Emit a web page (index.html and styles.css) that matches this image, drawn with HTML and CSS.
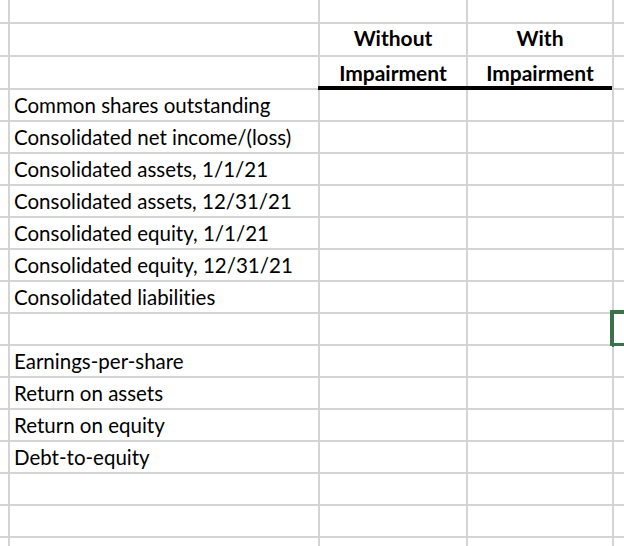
FILE: index.html
```html
<!DOCTYPE html>
<html>
<head>
<meta charset="utf-8">
<link rel="stylesheet" href="styles.css">
</head>
<body>
<div class="sheet">
  <div class="c"></div><div class="c"></div><div class="c"></div><div class="c"></div><div class="c"></div>
  <div class="c"></div><div class="c"></div><div class="c hd top">Without</div><div class="c hd top">With</div><div class="c"></div>
  <div class="c"></div><div class="c"></div><div class="c hd ul ul-b">Impairment</div><div class="c hd ul ul-c">Impairment</div><div class="c"></div>
  <div class="c"></div><div class="c lbl">Common shares outstanding</div><div class="c"></div><div class="c"></div><div class="c"></div>
  <div class="c"></div><div class="c lbl">Consolidated net income/(loss)</div><div class="c"></div><div class="c"></div><div class="c"></div>
  <div class="c"></div><div class="c lbl">Consolidated assets, 1/1/21</div><div class="c"></div><div class="c"></div><div class="c"></div>
  <div class="c"></div><div class="c lbl">Consolidated assets, 12/31/21</div><div class="c"></div><div class="c"></div><div class="c"></div>
  <div class="c"></div><div class="c lbl">Consolidated equity, 1/1/21</div><div class="c"></div><div class="c"></div><div class="c"></div>
  <div class="c"></div><div class="c lbl">Consolidated equity, 12/31/21</div><div class="c"></div><div class="c"></div><div class="c"></div>
  <div class="c"></div><div class="c lbl">Consolidated liabilities</div><div class="c"></div><div class="c"></div><div class="c"></div>
  <div class="c"></div><div class="c lbl"></div><div class="c"></div><div class="c"></div><div class="c sel"></div>
  <div class="c"></div><div class="c lbl">Earnings-per-share</div><div class="c"></div><div class="c"></div><div class="c"></div>
  <div class="c"></div><div class="c lbl">Return on assets</div><div class="c"></div><div class="c"></div><div class="c"></div>
  <div class="c"></div><div class="c lbl">Return on equity</div><div class="c"></div><div class="c"></div><div class="c"></div>
  <div class="c"></div><div class="c lbl">Debt-to-equity</div><div class="c"></div><div class="c"></div><div class="c"></div>
  <div class="c"></div><div class="c"></div><div class="c"></div><div class="c"></div><div class="c"></div>
  <div class="c"></div><div class="c"></div><div class="c"></div><div class="c"></div><div class="c"></div>
  <div class="c"></div><div class="c"></div><div class="c"></div><div class="c"></div><div class="c"></div>
</div>
</body>
</html>
```
FILE: styles.css
```css
html, body {
  margin: 0;
  padding: 0;
  background: #fff;
  overflow: hidden;
}
.sheet {
  width: 624px;
  height: 546px;
  display: grid;
  grid-template-columns: 8px 308px 146px 144px 10px;
  grid-template-rows: 22px 31px 31px repeat(14, 30px) 8px;
  gap: 2px;
  background: #d4d4d4;
  font-family: "Lato", "Liberation Sans", sans-serif;
  font-size: 20.5px;
  font-variant-ligatures: none;
  color: #000;
}
.c {
  background: #fff;
  position: relative;
  white-space: nowrap;
  overflow: visible;
}
.lbl {
  padding-left: 4px;
  line-height: 30px;
}
.hd {
  font-weight: 700;
  font-size: 21px;
  text-align: center;
  line-height: 31px;
}
.hd.top {
  line-height: 27px;
}
.ul::after {
  content: "";
  position: absolute;
  bottom: -2px;
  height: 4px;
  background: #000;
}
.ul-b::after { left: -2px; right: -2px; }
.ul-c::after { left: -2px; right: 0; }
.sel::after {
  content: "";
  position: absolute;
  top: -4px;
  bottom: -3px;
  left: -4px;
  right: -20px;
  border: 4px solid #38714a;
}
```
